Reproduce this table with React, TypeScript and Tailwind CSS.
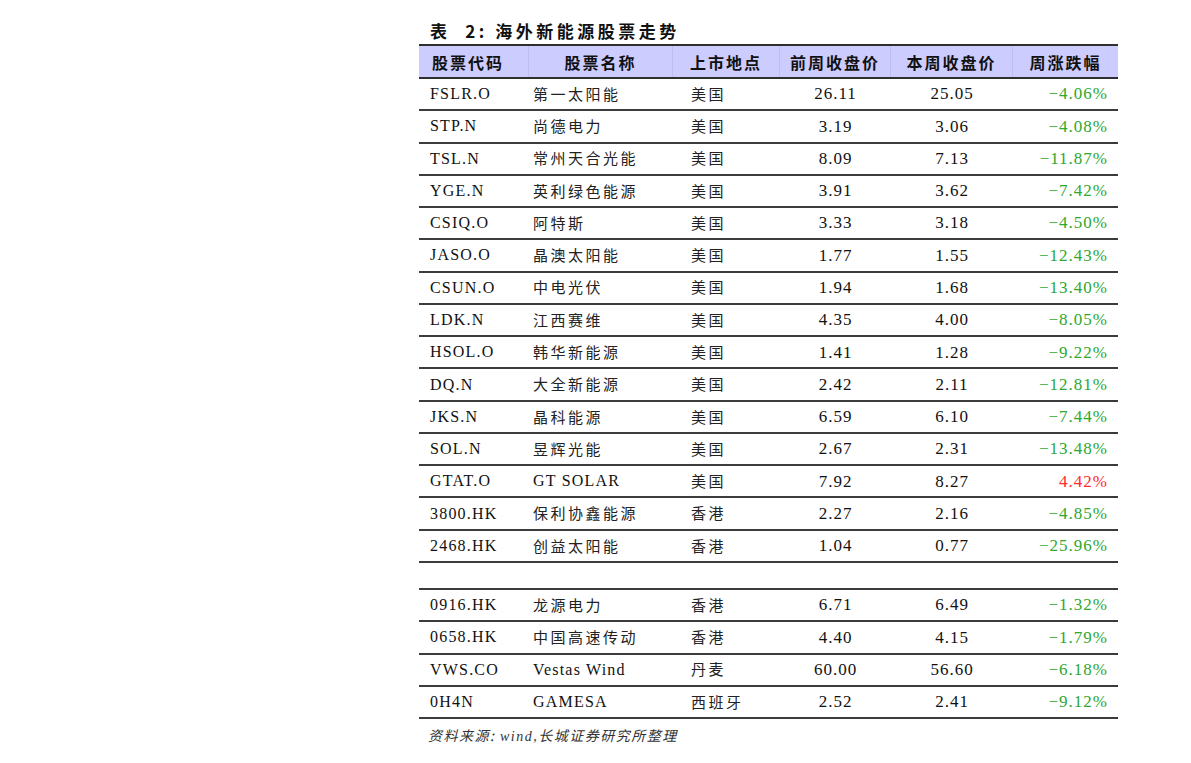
// 海外新能源股票走势 table, report style
import React from "react"

type Row = {
  code: string
  name: string
  market: string
  prev: string
  curr: string
  change: string
}

const rows: Row[] = [
  { code: "FSLR.O", name: "第一太阳能", market: "美国", prev: "26.11", curr: "25.05", change: "-4.06%" },
  { code: "STP.N", name: "尚德电力", market: "美国", prev: "3.19", curr: "3.06", change: "-4.08%" },
  { code: "TSL.N", name: "常州天合光能", market: "美国", prev: "8.09", curr: "7.13", change: "-11.87%" },
  { code: "YGE.N", name: "英利绿色能源", market: "美国", prev: "3.91", curr: "3.62", change: "-7.42%" },
  { code: "CSIQ.O", name: "阿特斯", market: "美国", prev: "3.33", curr: "3.18", change: "-4.50%" },
  { code: "JASO.O", name: "晶澳太阳能", market: "美国", prev: "1.77", curr: "1.55", change: "-12.43%" },
  { code: "CSUN.O", name: "中电光伏", market: "美国", prev: "1.94", curr: "1.68", change: "-13.40%" },
  { code: "LDK.N", name: "江西赛维", market: "美国", prev: "4.35", curr: "4.00", change: "-8.05%" },
  { code: "HSOL.O", name: "韩华新能源", market: "美国", prev: "1.41", curr: "1.28", change: "-9.22%" },
  { code: "DQ.N", name: "大全新能源", market: "美国", prev: "2.42", curr: "2.11", change: "-12.81%" },
  { code: "JKS.N", name: "晶科能源", market: "美国", prev: "6.59", curr: "6.10", change: "-7.44%" },
  { code: "SOL.N", name: "昱辉光能", market: "美国", prev: "2.67", curr: "2.31", change: "-13.48%" },
  { code: "GTAT.O", name: "GT SOLAR", market: "美国", prev: "7.92", curr: "8.27", change: "4.42%" },
  { code: "3800.HK", name: "保利协鑫能源", market: "香港", prev: "2.27", curr: "2.16", change: "-4.85%" },
  { code: "2468.HK", name: "创益太阳能", market: "香港", prev: "1.04", curr: "0.77", change: "-25.96%" },
]

const rows2: Row[] = [
  { code: "0916.HK", name: "龙源电力", market: "香港", prev: "6.71", curr: "6.49", change: "-1.32%" },
  { code: "0658.HK", name: "中国高速传动", market: "香港", prev: "4.40", curr: "4.15", change: "-1.79%" },
  { code: "VWS.CO", name: "Vestas Wind", market: "丹麦", prev: "60.00", curr: "56.60", change: "-6.18%" },
  { code: "0H4N", name: "GAMESA", market: "西班牙", prev: "2.52", curr: "2.41", change: "-9.12%" },
]

const latin = "font-['Liberation_Serif',serif] text-[17px] tracking-[1px]"
const code = "font-['Liberation_Serif',serif] text-[16px] tracking-[1.2px]"
const cjk = "font-['Noto_Sans_CJK_SC',sans-serif] text-[15px] tracking-[2.5px] text-[#222]"

const isLatin = (s: string) => /^[\x00-\x7F]+$/.test(s)

const DataRow: React.FC<{ row: Row }> = ({ row }) => {
  const up = !row.change.startsWith("-")
  return (
    <div className="flex h-[32.27px] items-center border-b-2 border-[#3c3c3c] text-[#111]">
      <div className={`w-[110px] pl-[11px] ${code}`}>{row.code}</div>
      <div className={`w-[144px] pl-[4px] ${isLatin(row.name) ? code : cjk}`}>
        {row.name}
      </div>
      <div className={`w-[107px] pl-[18px] ${cjk}`}>{row.market}</div>
      <div className={`w-[111px] text-center ${latin}`}>{row.prev}</div>
      <div className={`w-[122px] text-center ${latin}`}>{row.curr}</div>
      <div
        className={`w-[105px] pr-[10px] text-right ${latin} ${
          up ? "text-[#ff2a2a]" : "text-[#2ea82e]"
        }`}
      >
        {row.change.replace("-", "−")}
      </div>
    </div>
  )
}

const App: React.FC = () => {
  const headers = ["股票代码", "股票名称", "上市地点", "前周收盘价", "本周收盘价", "周涨跌幅"]
  const widths = ["w-[110px]", "w-[144px]", "w-[107px]", "w-[111px]", "w-[122px]", "w-[105px]"]

  return (
    <div className="min-h-screen bg-white">
      <div className="ml-[419px] w-[699px] pt-[17px]">
        {/* Title */}
        <h2 className="flex h-[27px] items-center pl-[11px] font-['Noto_Sans_CJK_SC',sans-serif] text-[17px] font-bold tracking-[3.5px] text-[#111]">
          表&nbsp;&nbsp;2:&nbsp;海外新能源股票走势
        </h2>

        {/* Table */}
        <div className="border-t-2 border-[#2f2f2f]">
          <div className="flex h-[33px] items-center border-b-2 border-[#2f2f2f] bg-[#ccccff] font-['Noto_Sans_CJK_SC',sans-serif] text-[16px] font-bold tracking-[2px] text-[#111]">
            {headers.map((h, i) => (
              <div
                key={h}
                className={`${widths[i]} flex h-full items-center border-r border-[#bdbdee] last:border-r-0 ${
                  i === 0 ? "justify-start pl-[13px]" : "justify-center"
                }`}
              >
                {h}
              </div>
            ))}
          </div>

          {rows.map((r) => (
            <DataRow key={r.code} row={r} />
          ))}

          {/* spacer row */}
          <div className="h-[27px] border-b-2 border-[#3c3c3c]" />

          {rows2.map((r) => (
            <DataRow key={r.code} row={r} />
          ))}
        </div>

        {/* Source note */}
        <p className="mt-[6px] pl-[9px] font-['Noto_Sans_CJK_SC',sans-serif] text-[14px] italic tracking-[1.5px] text-[#333]">
          资料来源:&nbsp;<span className="font-['Liberation_Serif',serif]">wind,</span>长城证券研究所整理
        </p>
      </div>
    </div>
  )
}

export default App
